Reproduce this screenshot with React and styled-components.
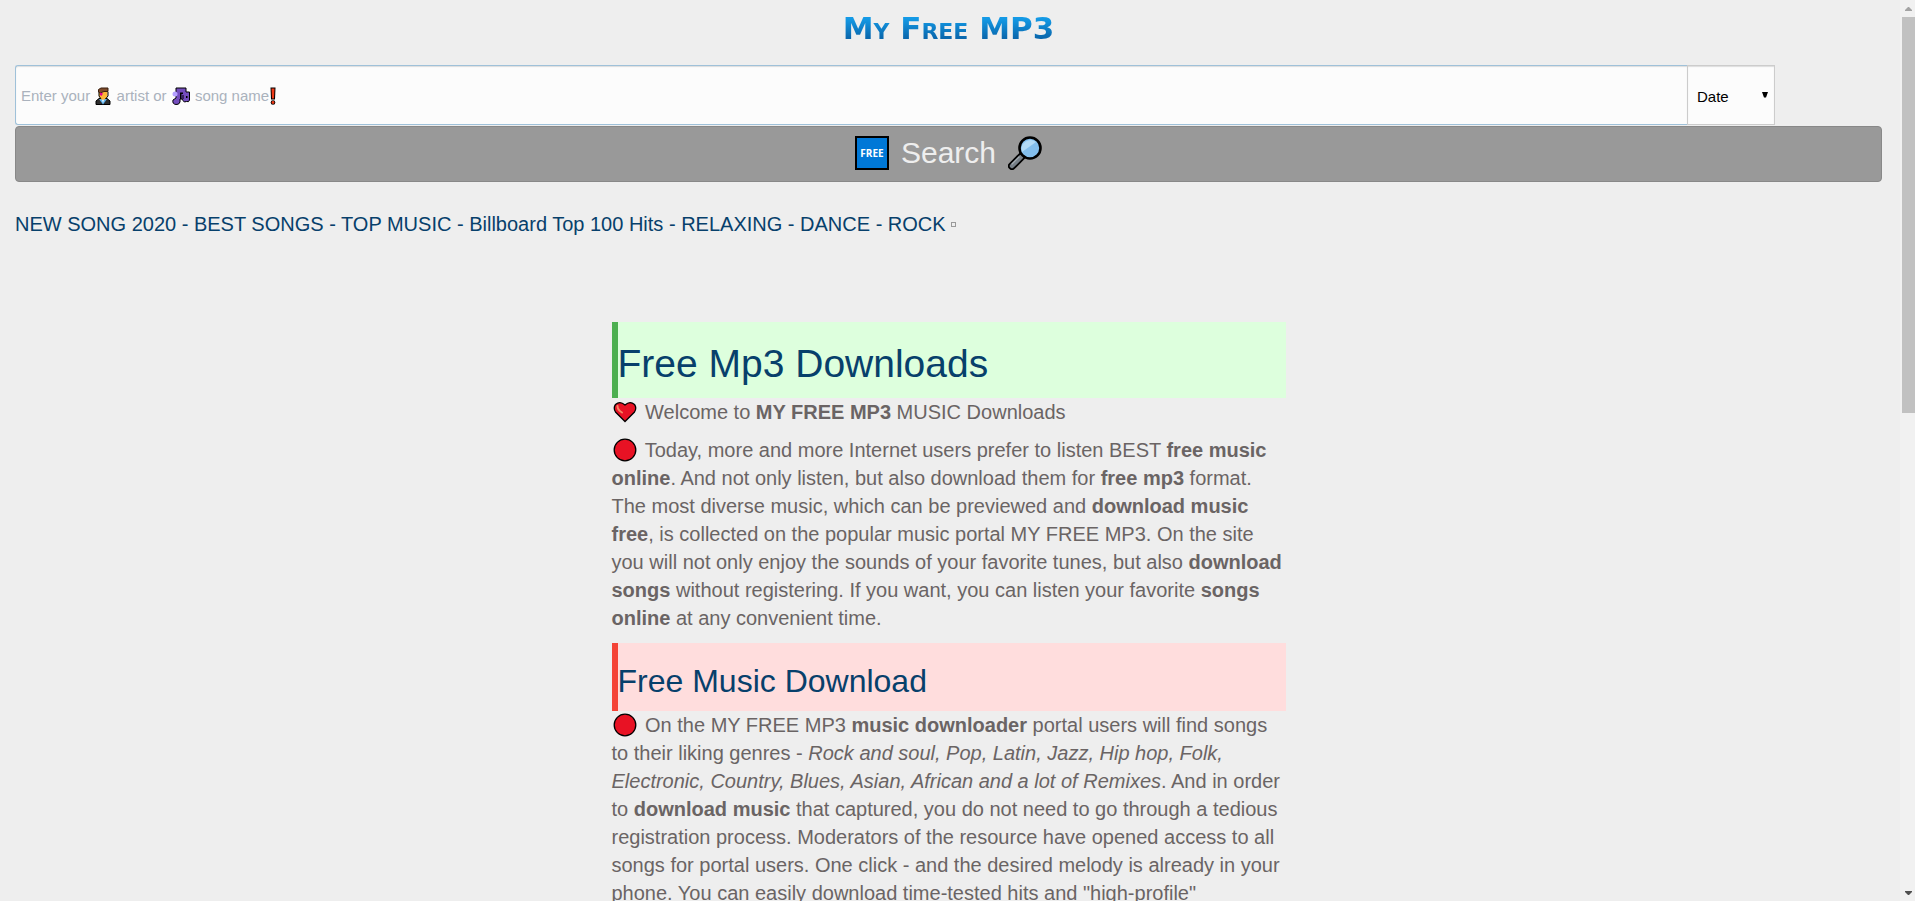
import React from "react";
import styled, { createGlobalStyle } from "styled-components";

const App = () => {
  return (
    <Shell>
      <GlobalStyle />
      <Page>
        <Logo href="#">My Free MP3</Logo>

        <form onSubmit={(e) => e.preventDefault()}>
          <Fields>
            <Field>
              <Input id="query" type="text" />
              <Hint htmlFor="query">
                Enter your <Singer /> artist or <Notes /> song name
                <Bang />
              </Hint>
            </Field>
            <Sort>
              <Select aria-label="Sort by" defaultValue="date">
                <option value="date">Date</option>
              </Select>
              <Caret viewBox="0 0 6 6" aria-hidden="true">
                <path d="M0 0H6L4 5.5H2Z" />
              </Caret>
            </Sort>
          </Fields>
          <SearchButton type="submit">
            <FreeBadge />
            Search
            <Magnifier />
          </SearchButton>
        </form>

        <Genres>
          <a href="#">
            NEW SONG 2020 - BEST SONGS - TOP MUSIC - Billboard Top 100 Hits - RELAXING - DANCE - ROCK
          </a>
          <Missing />
        </Genres>

        <Article>
          <Title>Free Mp3 Downloads</Title>
          <Text>
            <Heart /> Welcome to <b>MY FREE MP3</b> MUSIC Downloads
          </Text>
          <Text>
            <Dot /> Today, more and more Internet users prefer to listen BEST <b>free music online</b>. And
            not only listen, but also download them for <b>free mp3</b> format. The most diverse music,
            which can be previewed and <b>download music free</b>, is collected on the popular music portal
            MY FREE MP3. On the site you will not only enjoy the sounds of your favorite tunes, but
            also <b>download songs</b> without registering. If you want, you can listen your
            favorite <b>songs online</b> at any convenient time.
          </Text>
          <Subtitle>Free Music Download</Subtitle>
          <Text>
            <Dot /> On the MY FREE MP3 <b>music downloader</b> portal users will find songs to their liking
            genres - <i>Rock and soul, Pop, Latin, Jazz, Hip hop, Folk, Electronic, Country, Blues, Asian,
            African and a lot of Remixes</i>. And in order to <b>download music</b> that captured, you do
            not need to go through a tedious registration process. Moderators of the resource have opened
            access to all songs for portal users. One click - and the desired melody is already in your
            phone. You can easily download time-tested hits and "high-profile"
          </Text>
        </Article>
      </Page>

      <Rail aria-hidden="true">
        <Arrow viewBox="0 0 7 4" fill="#a3a3a3">
          <path d="M0 4V3L3 0H4L7 3V4Z" />
        </Arrow>
        <Thumb />
        <Arrow viewBox="0 0 7 4" fill="#505050">
          <path d="M0 0V1L3 4H4L7 1V0Z" />
        </Arrow>
      </Rail>
    </Shell>
  );
};

const Singer = () => (
  <SmallIcon viewBox="0 0 16 18" aria-hidden="true">
    <path d="M1 17.5V14L4 11.5H12L15 14V17.5Z" fill="#2d2d2d" stroke="#000" />
    <path d="M4 12L8 17.500L12 12Z" fill="#5eb5f0" />
    <path d="M7 12.500H9L8 16Z" fill="#fff" />
    <path d="M4 3V9L6 12.500H10L12.500 9V4Z" fill="#ffb636" />
    <path d="M4 4V9L6 12M10.500 12L13 9V5" fill="none" stroke="#000" />
    <path d="M3.500 5V2.500L6 1H13V4.500H9L5 6Z" fill="#7d4b2a" stroke="#3a2010" />
    <path d="M5 5.500L8 6.500L6.500 9L5 8Z" fill="#e3008c" />
  </SmallIcon>
);

const Notes = () => (
  <SmallIcon viewBox="0 0 18 18" $wide aria-hidden="true">
    <path
      d="M4 1H14V5H17.500V13Q17 15.500 14.500 14.500Q12 16 11 13.500L10 12H8V15Q7 18 4 17.500Q0 17 1 13L4 11Z"
      fill="#744dbd"
      stroke="#000"
    />
    <circle cx="3" cy="7" r="2.500" fill="#b4a0ff" />
    <path d="M8 5.500H11V7H9.500V12H8ZM14 9H15.500V11H14ZM10.500 8H11.500V12H10.500Z" />
  </SmallIcon>
);

const Bang = () => (
  <BangIcon viewBox="0 0 6 18" aria-hidden="true">
    <path d="M.5 .5H5.500L5 12.500H1Z" />
    <path d="M1.500 1.500H4.500L4 11.500H2Z" fill="#f03a17" />
    <circle cx="3" cy="15.500" r="2.300" />
    <circle cx="3" cy="15.500" r="1.400" fill="#f03a17" />
  </BangIcon>
);

const FreeBadge = () => (
  <BigIcon viewBox="0 0 34 34" aria-hidden="true">
    <rect x="1" y="1" width="32" height="32" fill="#0078d7" stroke="#000" strokeWidth="2" />
    <text x="17" y="21" textAnchor="middle" fill="#fff" fontFamily="Open Sans, sans-serif" fontSize="10" fontWeight="700">
      FREE
    </text>
  </BigIcon>
);

const Magnifier = () => (
  <BigIcon viewBox="0 0 34 34" aria-hidden="true">
    <path d="M14 20L4 30" stroke="#000" strokeWidth="8" strokeLinecap="round" />
    <path d="M13 21L4 30" stroke="#767f87" strokeWidth="4.500" strokeLinecap="round" />
    <path d="M11 21L4 28" stroke="#a5adb3" strokeWidth="1.200" strokeLinecap="round" />
    <circle cx="22" cy="12" r="10.500" fill="#83beec" stroke="#000" strokeWidth="2.600" />
    <path d="M14 16A9 9 0 0 1 28 6Z" fill="#b3dbf6" />
  </BigIcon>
);

const Heart = () => (
  <TextIcon viewBox="0 0 24 24" aria-hidden="true">
    <path
      d="M12 21.500L2.500 12Q0 8 2.500 4.500Q7 .5 12 5Q17 .5 21.500 4.500Q24 8 21.500 12Z"
      fill="#e81224"
      stroke="#000"
      strokeWidth="1.300"
    />
    <path d="M4.500 6Q4.500 10 9 12.500" fill="none" stroke="#f58463" strokeWidth="2" strokeLinecap="round" />
  </TextIcon>
);

const Dot = () => (
  <TextIcon viewBox="0 0 24 24" aria-hidden="true">
    <circle cx="12" cy="12" r="10.800" fill="#e81224" stroke="#000" strokeWidth="1.300" />
  </TextIcon>
);

const GlobalStyle = createGlobalStyle`
  * {
    box-sizing: border-box;
  }

  body {
    margin: 0;
    background: #eeeeee;
    color: #6a6464;
    font-family: "Liberation Sans", Arial, sans-serif;
    font-size: 20px;
    line-height: 28px;
  }
`;

const Shell = styled.div`
  display: flex;
  height: 100vh;
  overflow: hidden;
`;

const Page = styled.main`
  flex: 1;
  min-width: 0;
  padding: 12px 18px 0 15px;
`;

const Logo = styled.a`
  display: block;
  width: fit-content;
  margin: 0 auto 21px;
  font-family: "DejaVu Sans", sans-serif;
  font-size: 31px;
  font-weight: 700;
  font-variant: small-caps;
  line-height: 32px;
  text-decoration: none;
  color: transparent;
  background: linear-gradient(#149ae6 20%, #0a68ae 80%);
  background-clip: text;
`;

const Fields = styled.div`
  display: flex;
  height: 60px;
  margin: 0 107px 1px 0;
`;

const Field = styled.div`
  position: relative;
  flex: 1;
`;

const Input = styled.input`
  display: block;
  width: 100%;
  height: 100%;
  padding: 0 5px;
  border: 1px solid #9fc1d9;
  border-right: 0;
  border-radius: 3px 0 0 3px;
  background: #fcfcfc;
  box-shadow: inset 0 1px 1px #dddddd;
  font: 15px "Liberation Sans", Arial, sans-serif;
  outline: none;
`;

const Hint = styled.label`
  position: absolute;
  inset: 0 6px;
  display: flex;
  align-items: center;
  padding-top: 2px;
  white-space: pre;
  color: #aab2bd;
  font-size: 15px;
  cursor: text;
`;

const Sort = styled.div`
  position: relative;
  width: 88px;
`;

const Select = styled.select`
  display: block;
  width: 100%;
  height: 100%;
  padding: 2px 9px 0;
  appearance: none;
  border: 1px solid #cccccc;
  border-radius: 0;
  background: #fcfcfc;
  box-shadow: inset 0 1px 1px #dddddd;
  color: #000000;
  font: 15px "Liberation Sans", Arial, sans-serif;
`;

const Caret = styled.svg`
  position: absolute;
  top: 27px;
  right: 7px;
  width: 6px;
  height: 6px;
  pointer-events: none;
`;

const SearchButton = styled.button`
  display: flex;
  align-items: center;
  justify-content: center;
  gap: 12px;
  width: 100%;
  height: 56px;
  padding: 0 0 2px;
  border: 1px solid #888888;
  border-radius: 4px;
  background: #999999;
  color: #eeeeee;
  font: 30px "Liberation Sans", Arial, sans-serif;
`;

const SmallIcon = styled.svg`
  width: ${(props) => (props.$wide ? "18px" : "16px")};
  height: 18px;
  margin: 0 1px;
`;

const BangIcon = styled.svg`
  width: 6px;
  height: 18px;
  margin-left: 1px;
`;

const BigIcon = styled.svg`
  width: 34px;
  height: 34px;
`;

const TextIcon = styled.svg`
  width: 24px;
  height: 24px;
  margin: 0 3px 0 1px;
  vertical-align: -5px;
`;

const Genres = styled.nav`
  margin-top: 28px;

  a {
    color: #07406b;
    text-decoration: none;
  }
`;

const Missing = styled.span`
  display: inline-block;
  width: 5px;
  height: 5px;
  margin-left: 5px;
  border: 1px solid #999999;
  vertical-align: 4px;
`;

const Article = styled.article`
  width: 674px;
  max-width: 100%;
  margin: 84px auto 0;
`;

const Title = styled.h1`
  margin: 0;
  padding: 14px 0 6px;
  border-left: 6px solid #4caf50;
  background: #ddffdd;
  color: #07406b;
  font-size: 39px;
  font-weight: 400;
  line-height: 56px;
`;

const Subtitle = styled(Title).attrs({ as: "h2" })`
  margin-top: 11px;
  padding: 16px 0 8px;
  border-color: #f44336;
  background: #ffdddd;
  font-size: 32px;
  line-height: 44px;
`;

const Text = styled.p`
  margin: 0 0 10px;
`;

const Rail = styled.aside`
  display: flex;
  flex-direction: column;
  width: 15px;
  padding: 7px 0 6px 2px;
  background: #f1f1f1;
`;

const Arrow = styled.svg`
  width: 7px;
  height: 4px;
  margin-left: 3px;
`;

const Thumb = styled.div`
  height: 44vh;
  margin: 6px 0 auto;
  background: #c1c1c1;
`;

export default App;
